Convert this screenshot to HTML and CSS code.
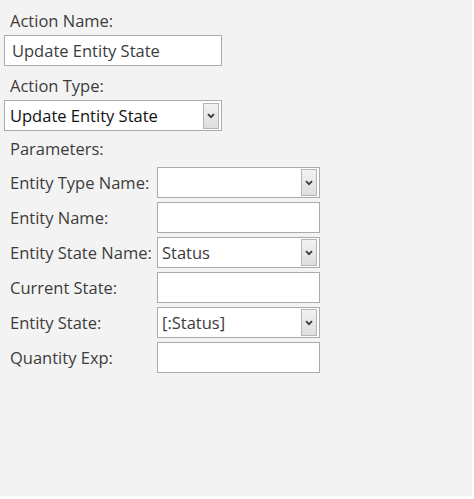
FILE: index.html
```html
<!DOCTYPE html>
<html>
<head>
<meta charset="utf-8">
<link rel="stylesheet" href="styles.css">
</head>
<body>
<div class="panel">
  <div class="label first">Action Name:</div>
  <div class="field wide"><span class="val">Update Entity State</span></div>
  <div class="label after-field">Action Type:</div>
  <div class="field wide select dark"><span class="val">Update Entity State</span><span class="drop"><svg width="8" height="6" viewBox="0 0 8 6"><path d="M1 1.2 L4 4.2 L7 1.2" fill="none" stroke="#3a3a3a" stroke-width="1.8"/></svg></span></div>
  <div class="label params">Parameters:</div>
  <div class="grid">
    <div class="glabel">Entity Type Name:</div>
    <div class="field select"><span class="val"></span><span class="drop"><svg width="8" height="6" viewBox="0 0 8 6"><path d="M1 1.2 L4 4.2 L7 1.2" fill="none" stroke="#3a3a3a" stroke-width="1.8"/></svg></span></div>
    <div class="glabel">Entity Name:</div>
    <div class="field"><span class="val"></span></div>
    <div class="glabel">Entity State Name:</div>
    <div class="field select"><span class="val">Status</span><span class="drop"><svg width="8" height="6" viewBox="0 0 8 6"><path d="M1 1.2 L4 4.2 L7 1.2" fill="none" stroke="#3a3a3a" stroke-width="1.8"/></svg></span></div>
    <div class="glabel">Current State:</div>
    <div class="field"><span class="val"></span></div>
    <div class="glabel">Entity State:</div>
    <div class="field select"><span class="val">[:Status]</span><span class="drop"><svg width="8" height="6" viewBox="0 0 8 6"><path d="M1 1.2 L4 4.2 L7 1.2" fill="none" stroke="#3a3a3a" stroke-width="1.8"/></svg></span></div>
    <div class="glabel">Quantity Exp:</div>
    <div class="field"><span class="val"></span></div>
  </div>
</div>
</body>
</html>
```

FILE: styles.css
```css
html, body {
  margin: 0;
  padding: 0;
  background: #ffffff;
}
body {
  font-family: "Open Sans", "Noto Sans", sans-serif;
  font-size: 16.5px;
  color: #3c3c3c;
}
.panel {
  width: 472px;
  height: 496px;
  box-sizing: border-box;
  background: #f3f3f3;
  padding: 10px 0 0 4px;
}
.label {
  line-height: 22px;
  height: 22px;
  padding-left: 6px;
}
.field {
  box-sizing: border-box;
  height: 31px;
  background: #fff;
  border: 1px solid #ababab;
  display: flex;
  align-items: center;
  padding: 0 2px 0 7px;
  color: #3c3c3c;
}
.field.wide {
  width: 218px;
  margin-top: 3px;
}
.field.select.wide {
  padding-left: 5px;
}
.after-field {
  margin-top: 9px;
}
.field.dark {
  color: #111;
}
.val {
  flex: 1;
  white-space: nowrap;
  overflow: hidden;
}
.drop {
  width: 16px;
  height: 26px;
  box-sizing: border-box;
  border: 1px solid #b5b5b5;
  background: linear-gradient(#f2f2f2, #dedede);
  display: flex;
  align-items: center;
  justify-content: center;
}
.grid .drop {
  height: 27px;
}
.params {
  margin-top: 7px;
}
.grid {
  margin-top: 7px;
  display: grid;
  grid-template-columns: 153px 163px;
  grid-auto-rows: 31px;
  row-gap: 4px;
}
.glabel {
  padding-left: 6px;
  display: flex;
  align-items: center;
  white-space: nowrap;
}
.grid .field {
  padding-left: 4px;
}
```
